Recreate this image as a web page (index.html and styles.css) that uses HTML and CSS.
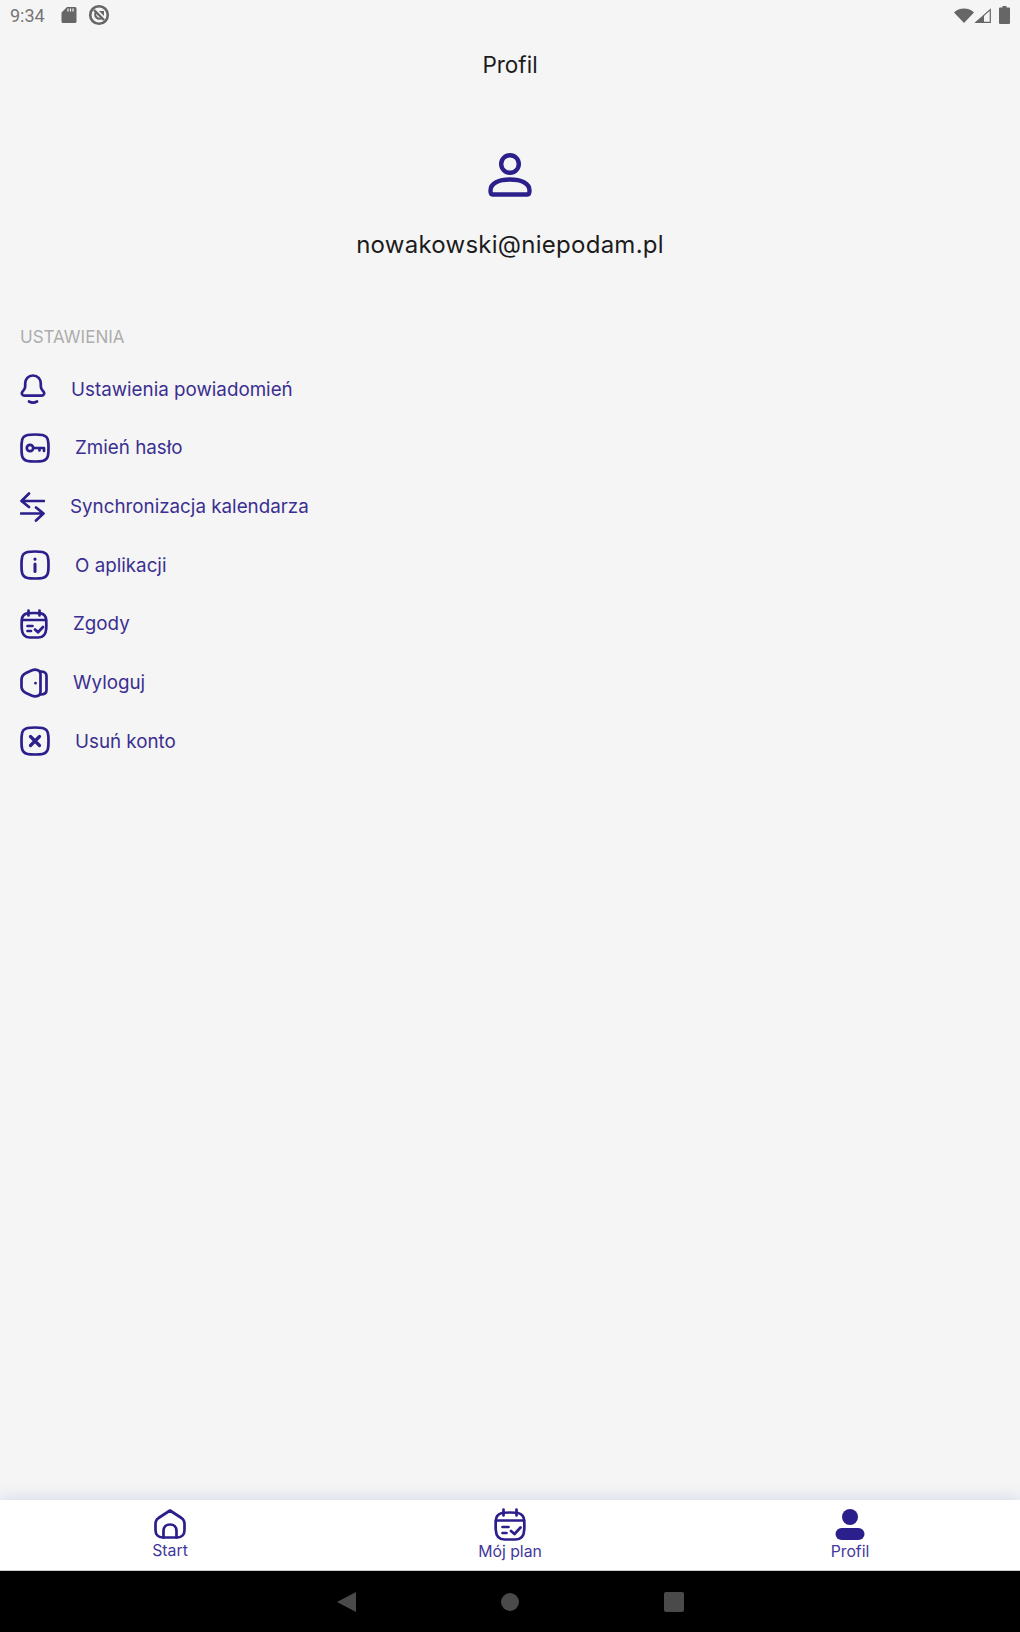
FILE: index.html
```html
<!DOCTYPE html>
<html lang="pl">
<head>
    <meta charset="utf-8" />
    <title>Profil</title>
    <link rel="stylesheet" href="styles.css">
</head>
<body>
    <div class="app">
        <div class="status-bar">
            <div class="status-left">
                <span class="status-time">9:34</span>
                <svg class="status-sd" width="16" height="18" viewBox="0 0 16 18"><path d="M6 1h8a1.500 1.500 0 0 1 1.500 1.500v13a1.500 1.500 0 0 1-1.500 1.500H2a1.500 1.500 0 0 1-1.500-1.500V6.500z" fill="#666"/><path d="M7 2.500v3M9.500 2.500v3M12 2.500v3" stroke="#f5f5f5" stroke-width="1.200"/></svg>
                <svg class="status-block" width="22" height="22" viewBox="0 0 22 22"><circle cx="11" cy="11" r="8.800" fill="none" stroke="#666" stroke-width="2.600"/><path d="M14.500 13.500a4.200 4.200 0 1 1-6-6" fill="none" stroke="#666" stroke-width="2.200"/><path d="M6 6l10 10" stroke="#666" stroke-width="2.400"/><path d="M11 7h5v5z" fill="#666"/></svg>
            </div>
            <div class="status-right">
                <svg width="20" height="15" viewBox="0 0 20 15"><path d="M0 4.500C2.500 1.800 6 .5 10 .5s7.500 1.300 10 4L10 15z" fill="#666"/></svg>
                <svg class="status-signal" width="17" height="15" viewBox="0 0 17 15"><path d="M16.300 1.500v12.800H2z" fill="none" stroke="#666" stroke-width="1.200"/><path d="M10 7.500v7H1z" fill="#666"/></svg>
                <svg class="status-battery" width="11" height="18" viewBox="0 0 11 18"><path d="M3.500 0h4v1.500H10a1 1 0 0 1 1 1V17a1 1 0 0 1-1 1H1a1 1 0 0 1-1-1V2.500a1 1 0 0 1 1-1h2.500z" fill="#666"/></svg>
            </div>
        </div>

        <div class="screen">
            <div class="page-title">Profil</div>

            <div class="account">
                <svg width="44" height="44" viewBox="0 0 44 44" fill="none" stroke="#2b1f8b" stroke-width="4.400">
                    <circle cx="22" cy="11" r="8.800"/>
                    <path d="M2.500 37.500C2.500 30 11 26.500 22 26.500S41.500 30 41.500 37.500c0 3-.5 4-2 4h-35c-1.500 0-2-1-2-4z" stroke-linejoin="round"/>
                </svg>
                <div class="account-mail">nowakowski@niepodam.pl</div>
            </div>

            <div class="section-label">USTAWIENIA</div>

            <div class="menu">
                <div class="menu-row">
                    <svg width="26" height="30" viewBox="0 0 26 30" fill="none" stroke="#2b1f8b" stroke-width="2.700" stroke-linecap="round" stroke-linejoin="round">
                        <path d="M13 1.500c-4.800 0-7.800 3.600-7.800 8v3c0 2.500-1.200 3.500-2.700 5.200-1.300 1.500-.6 4 2.200 4h16.600c2.800 0 3.500-2.500 2.200-4-1.500-1.700-2.700-2.700-2.700-5.200v-3c0-4.400-3-8-7.800-8z"/>
                        <path d="M9 27.500c2.500 1.300 5.500 1.300 8 0"/>
                    </svg>
                    <span>Ustawienia powiadomień</span>
                </div>
                <div class="menu-row">
                    <svg width="30" height="30" viewBox="0 0 30 30" fill="none" stroke="#2b1f8b" stroke-width="2.700" stroke-linecap="round" stroke-linejoin="round">
                        <path d="M15 1.500c-3 0-5.500 0-7.500.5-3.200.8-5 2.600-5.500 5.500-.4 2-.5 4.500-.5 7.500s.1 5.500.5 7.500c.5 2.900 2.300 4.700 5.500 5.500 2 .5 4.500.5 7.500.5s5.500 0 7.500-.5c3.200-.8 5-2.600 5.500-5.500.4-2 .5-4.500.5-7.500s-.1-5.500-.5-7.500c-.5-2.900-2.300-4.700-5.500-5.500-2-.5-4.500-.5-7.500-.5z"/>
                        <circle cx="10" cy="15" r="3.200"/>
                        <path d="M13.500 15H24v3M19.500 15v2.500"/>
                    </svg>
                    <span>Zmień hasło</span>
                </div>
                <div class="menu-row">
                    <svg width="25" height="30" viewBox="0 0 25 30" fill="none" stroke="#2b1f8b" stroke-width="2.700" stroke-linecap="round" stroke-linejoin="round">
                        <path d="M24 9H1.500M9 1.500L1.500 9 9 15"/>
                        <path d="M1 21.500h22.500M16 15.500l7.500 6-7.500 7"/>
                    </svg>
                    <span>Synchronizacja kalendarza</span>
                </div>
                <div class="menu-row">
                    <svg width="30" height="30" viewBox="0 0 30 30" fill="none" stroke="#2b1f8b" stroke-width="2.700" stroke-linecap="round" stroke-linejoin="round">
                        <path d="M15 1.500c-3 0-5.500 0-7.500.5-3.200.8-5 2.600-5.500 5.500-.4 2-.5 4.500-.5 7.500s.1 5.500.5 7.500c.5 2.900 2.300 4.700 5.500 5.500 2 .5 4.500.5 7.500.5s5.500 0 7.500-.5c3.200-.8 5-2.600 5.500-5.500.4-2 .5-4.500.5-7.500s-.1-5.500-.5-7.500c-.5-2.900-2.300-4.700-5.500-5.500-2-.5-4.500-.5-7.500-.5z"/>
                        <path d="M15 14v7.500" stroke-width="3"/>
                        <path d="M15 9v.2" stroke-width="3"/>
                    </svg>
                    <span>O aplikacji</span>
                </div>
                <div class="menu-row">
                    <svg width="28" height="30" viewBox="0 0 28 30" fill="none" stroke="#2b1f8b" stroke-width="2.700" stroke-linecap="round" stroke-linejoin="round">
                        <path d="M14 4c-3 0-5.500 0-7 .4C3.500 5.200 2 7.500 1.800 11c-.2 3-.2 6 0 9 .3 5 3 8.500 7.700 8.500h9c4.700 0 7.400-3.500 7.700-8.500.2-3 .2-6 0-9-.2-3.500-1.700-5.800-5.200-6.600C19.500 4 17 4 14 4z"/>
                        <path d="M8.500 1.500v5M19.500 1.500v5M2 11h24"/>
                        <path d="M7.500 17h5M7.500 22h3.500M15 20.500l3 2.800 5-5.300"/>
                    </svg>
                    <span>Zgody</span>
                </div>
                <div class="menu-row">
                    <svg width="28" height="30" viewBox="0 0 28 30" fill="none" stroke="#2b1f8b" stroke-width="2.700" stroke-linecap="round" stroke-linejoin="round">
                        <path d="M16.500 1.800c-1.800-.3-3.300 0-5 .7L6 5C3 6.500 1.500 8.500 1.500 11.500v7c0 3 1.500 5 4.500 6.500l5.500 2.500c1.700.7 3.200 1 5 .7 2.500-.4 4-2 4-4.500V6.300c0-2.500-1.500-4.100-4-4.500z"/>
                        <path d="M20.500 3.500c3.500 0 6 1 6 4.500v14c0 3.500-2.500 4.500-6 4.500"/>
                        <path d="M15.500 15v.2"/>
                    </svg>
                    <span>Wyloguj</span>
                </div>
                <div class="menu-row">
                    <svg width="30" height="30" viewBox="0 0 30 30" fill="none" stroke="#2b1f8b" stroke-width="2.700" stroke-linecap="round" stroke-linejoin="round">
                        <path d="M15 1.500c-3 0-5.500 0-7.500.5-3.200.8-5 2.600-5.500 5.500-.4 2-.5 4.500-.5 7.500s.1 5.500.5 7.500c.5 2.900 2.300 4.700 5.500 5.500 2 .5 4.500.5 7.500.5s5.500 0 7.500-.5c3.200-.8 5-2.600 5.500-5.500.4-2 .5-4.500.5-7.500s-.1-5.500-.5-7.500c-.5-2.900-2.300-4.700-5.500-5.500-2-.5-4.500-.5-7.500-.5z"/>
                        <path d="M10.500 10.500l9 9M19.500 10.500l-9 9" stroke-width="3.200"/>
                    </svg>
                    <span>Usuń konto</span>
                </div>
            </div>
        </div>

        <div class="bottom-nav">
            <div class="nav-item">
                <svg width="32" height="30" viewBox="0 0 32 30" fill="none" stroke="#2b1f8b" stroke-width="2.700" stroke-linecap="round" stroke-linejoin="round">
                    <path d="M16 1.500L4.500 9C2.500 10.400 1.500 12 1.500 14.500v6.500c0 4.500 2.700 7.500 7 7.500h15c4.300 0 7-3 7-7.500v-6.500c0-2.500-1-4.100-3-5.500z"/>
                    <path d="M9.500 28.500V22c0-4 2.500-6.500 6.500-6.500s6.500 2.500 6.500 6.500v6.500"/>
                </svg>
                <span class="nav-label">Start</span>
            </div>
            <div class="nav-item nav-item-plan">
                <svg width="32" height="33" viewBox="0 0 32 33" fill="none" stroke="#2b1f8b" stroke-width="2.700" stroke-linecap="round" stroke-linejoin="round">
                    <path d="M16 4.500c-3.500 0-6 0-8 .5C4 6 2 8.500 1.800 12.500c-.2 3.500-.2 6.500 0 9.500.3 6 3.200 9.500 8.700 9.500h11c5.500 0 8.400-3.500 8.700-9.500.2-3 .2-6 0-9.500C30 8.500 28 6 24 5c-2-.5-4.500-.5-8-.5z"/>
                    <path d="M9.500 1.500v6M22.500 1.500v6M2 12.500h28"/>
                    <path d="M8.500 19h6M8.500 25h4M17 23l3.500 3 6-6.500"/>
                </svg>
                <span class="nav-label nav-label-plan">Mój plan</span>
            </div>
            <div class="nav-item">
                <svg width="30" height="31" viewBox="0 0 30 31" fill="#2b1f8b">
                    <circle cx="15" cy="8" r="8"/>
                    <rect x="0.500" y="19" width="29" height="12" rx="6"/>
                </svg>
                <span class="nav-label">Profil</span>
            </div>
        </div>

        <div class="system-nav">
            <div class="sys-back"></div>
            <div class="sys-home"></div>
            <div class="sys-recent"></div>
        </div>
    </div>
</body>
</html>
```

FILE: styles.css
```css
html, body {
    margin: 0;
    padding: 0;
}

body {
    background-color: #F5F5F5;
    font-family: "Inter", "Lato", sans-serif;
    color: #1C1C1C;
}

.app {
    display: flex;
    flex-direction: column;
    width: 1020px;
    height: 1632px;
    overflow: hidden;
}

.status-bar {
    display: flex;
    justify-content: space-between;
    align-items: center;
    height: 30px;
    padding: 0 10px;
    flex-shrink: 0;
}

.status-left, .status-right {
    display: flex;
    align-items: center;
}

.status-time {
    font-family: "Roboto", sans-serif;
    font-size: 18px;
    color: #757575;
    width: 51px;
}

.status-block {
    margin-left: 11px;
}

.status-battery {
    margin-left: 8px;
}

.screen {
    flex: 1;
}

.page-title {
    text-align: center;
    font-size: 22.5px;
    line-height: 30px;
    padding-top: 20px;
}

.account {
    display: flex;
    flex-direction: column;
    align-items: center;
    padding-top: 73px;
}

.account-mail {
    font-size: 24px;
    line-height: 32px;
    margin-top: 32px;
    letter-spacing: 0.26px;
}

.section-label {
    font-size: 17px;
    line-height: 24px;
    color: #ADADAD;
    padding: 0 0 0 20px;
    margin-top: 64px;
}

.menu {
    padding-left: 20px;
    margin-top: 11px;
}

.menu-row {
    display: flex;
    align-items: center;
    gap: 25px;
    height: 58.67px;
    font-size: 18.8px;
    color: #3A2F90;
}

.bottom-nav {
    display: grid;
    grid-template-columns: 1fr 1fr 1fr;
    height: 70px;
    flex-shrink: 0;
    background-color: #FFFFFF;
    border-bottom: 1px solid #CCCCCC;
    box-shadow: 0 -3px 14px rgba(70, 100, 190, 0.16);
}

.nav-item {
    display: flex;
    flex-direction: column;
    align-items: center;
    padding-top: 9px;
}

.nav-item-plan {
    padding-top: 8px;
}

.nav-label {
    font-size: 15.8px;
    line-height: 20px;
    margin-top: 2px;
    color: #43389C;
}

.nav-label-plan {
    margin-top: 1px;
}

.system-nav {
    height: 61px;
    flex-shrink: 0;
    background-color: #000000;
    display: flex;
    justify-content: center;
    align-items: center;
    gap: 145px;
}

.sys-back {
    width: 0;
    height: 0;
    border-top: 10px solid transparent;
    border-bottom: 10px solid transparent;
    border-right: 19px solid #4A4A4A;
}

.sys-home {
    width: 18px;
    height: 18px;
    border-radius: 50%;
    background-color: #4A4A4A;
}

.sys-recent {
    width: 20px;
    height: 20px;
    border-radius: 2px;
    background-color: #4A4A4A;
}
```
